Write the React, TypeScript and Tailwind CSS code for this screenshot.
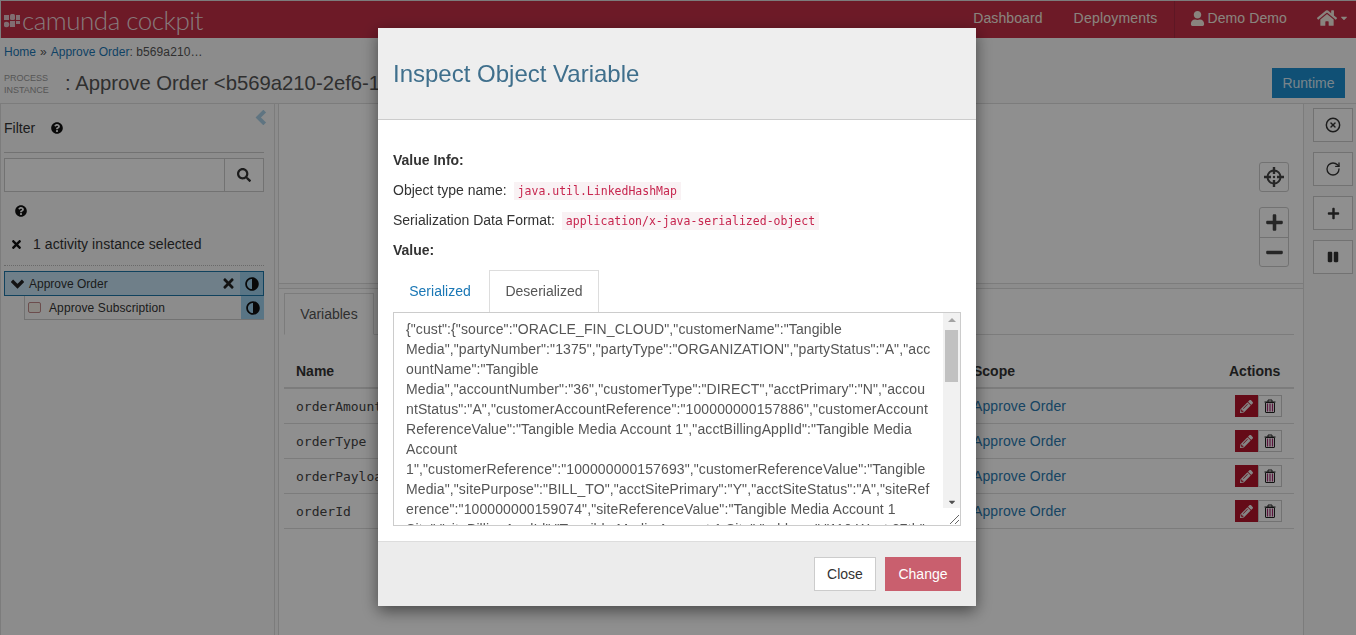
import {
  FaAdjust, FaHome, FaMinus, FaPause, FaPencilAlt, FaPlus,
  FaQuestionCircle, FaSearch, FaTimes, FaUser, FaCaretDown,
} from "react-icons/fa"
import { CircleX, RotateCw } from "lucide-react"

const VARIABLES = ["orderAmount", "orderType", "orderPayload", "orderId"]

const RAW_VALUE =
  '{"cust":{"source":"ORACLE_FIN_CLOUD","customerName":"Tangible Media","partyNumber":"1375","partyType":"ORGANIZATION","partyStatus":"A","accountName":"Tangible Media","accountNumber":"36","customerType":"DIRECT","acctPrimary":"N","accountStatus":"A","customerAccountReference":"100000000157886","customerAccountReferenceValue":"Tangible Media Account 1","acctBillingApplId":"Tangible Media Account 1","customerReference":"100000000157693","customerReferenceValue":"Tangible Media","sitePurpose":"BILL_TO","acctSitePrimary":"Y","acctSiteStatus":"A","siteReference":"100000000159074","siteReferenceValue":"Tangible Media Account 1 Site","siteBillingApplId":"Tangible Media Account 1 Site","address":"110 West 27th"'

function LogoMark() {
  return (
    <svg width="16" height="14" viewBox="0 0 16 14" className="mt-[3px] shrink-0">
      <rect x="0" y="1" width="5" height="5" fill="#e6c3c9" />
      <rect x="6" y="0" width="5" height="6" rx="1.5" fill="#e6c3c9" />
      <rect x="12" y="1" width="4" height="5" fill="#e6c3c9" />
      <circle cx="2.5" cy="10.5" r="2.8" fill="#e6c3c9" />
      <rect x="6" y="7" width="5" height="6" fill="#e6c3c9" />
      <rect x="12" y="7" width="4" height="3" fill="#e6c3c9" />
    </svg>
  )
}

function Crosshair() {
  return (
    <svg width="22" height="22" viewBox="0 0 22 22" className="text-[#444]">
      <circle cx="11" cy="11" r="6.5" fill="none" stroke="currentColor" strokeWidth="2" />
      <path d="M11 1v7M11 14v7M1 11h7M14 11h7" stroke="currentColor" strokeWidth="2.4" />
      <circle cx="11" cy="11" r="1.2" fill="currentColor" />
    </svg>
  )
}

function TrashIcon() {
  return (
    <svg width="12" height="14" viewBox="0 0 12 14" fill="none" stroke="#a3286f" strokeWidth="1">
      <path d="M0.5 3h11M4 3V1h4v2" stroke="#222" />
      <rect x="1.5" y="3.5" width="9" height="10" rx="0.5" stroke="#222" />
      <path d="M3.5 4.5v8M6 4.5v8M8.5 4.5v8" strokeWidth="1.2" />
    </svg>
  )
}

function Chevron({ points, className }: { points: string; className: string }) {
  return (
    <svg viewBox="0 0 14 14" fill="none" stroke="currentColor" strokeWidth="3.6" className={className}>
      <polyline points={points} />
    </svg>
  )
}

function SideButton({ children }: { children: React.ReactNode }) {
  return (
    <div className="flex h-[34px] w-[40px] items-center justify-center border border-[#ccc] bg-white text-[#333]">
      {children}
    </div>
  )
}

function Sidebar() {
  return (
    <aside className="flex w-[275px] shrink-0 flex-col border-r border-l border-[#ddd] pl-[3px] pr-[10px] pt-[14px] text-[#333]">
      <div className="relative flex h-[20px] items-center">
        <span>Filter</span>
        <FaQuestionCircle className="ml-[16px] text-[12px] text-[#111]" />
        <Chevron points="10,1 4,7 10,13" className="absolute right-[-5px] top-[-8px] h-[15px] w-[15px] text-[#a9cfe6]" />
      </div>
      <div className="mt-[14px] border-t border-[#ccc]" />
      <div className="mt-[5px] flex h-[34px] border border-[#ccc] bg-white">
        <div className="flex-1" />
        <div className="flex w-[39px] items-center justify-center border-l border-[#ccc]">
          <FaSearch className="text-[14px] text-[#333]" />
        </div>
      </div>
      <FaQuestionCircle className="ml-[11px] mt-[13px] text-[12px] text-[#111]" />
      <div className="mt-[17px] flex h-[20px] items-center text-[14px] tracking-[0.07px]">
        <FaTimes className="ml-[6px] mr-[10px] text-[13px] text-[#111]" />
        <span>1 activity instance selected</span>
      </div>
      <div className="mt-[11px] border-t border-dotted border-[#bbb]" />
      <div className="mt-[5px] flex h-[25px] items-center border border-[#1d76a8] bg-[#c6e3f5] text-[12px]">
        <Chevron points="1,4 7,10 13,4" className="ml-[6px] mr-[5px] h-[13px] w-[13px] text-[#222]" />
        <span>Approve Order</span>
        <FaTimes className="ml-auto mr-[4px] text-[15px] text-[#222]" />
        <div className="flex h-full w-[23px] items-center justify-center bg-[#9fd0ee]">
          <FaAdjust className="-scale-x-100 text-[14px] text-[#111]" />
        </div>
      </div>
      <div className="ml-[20px] flex h-[24px] items-center border-b border-l border-[#ccc] text-[12px] tracking-[0.1px]">
        <div className="ml-[3px] mr-[8px] h-[11px] w-[13px] rounded-[2px] border border-[#c08a8a] bg-[#f7f0e8]" />
        <span>Approve Subscription</span>
        <div className="ml-auto flex h-full w-[23px] items-center justify-center bg-[#9fd0ee]">
          <FaAdjust className="-scale-x-100 text-[14px] text-[#111]" />
        </div>
      </div>
    </aside>
  )
}

function MainPanel() {
  return (
    <main className="ml-[3px] flex flex-1 flex-col border-l border-r border-[#ddd]">
      <div className="flex h-[180px] flex-col items-end border-b border-[#ddd] bg-white pr-[14px] pt-[58px]">
        <div className="flex h-[30px] w-[30px] items-center justify-center rounded-[3px] border border-[#ccc]">
          <Crosshair />
        </div>
        <div className="mt-[15px] flex w-[30px] flex-col rounded-[3px] border border-[#ccc] text-[#444]">
          <div className="flex h-[30px] items-center justify-center border-b border-[#ccc]">
            <FaPlus className="text-[19px]" />
          </div>
          <div className="flex h-[28px] items-center justify-center">
            <FaMinus className="text-[19px]" />
          </div>
        </div>
      </div>
      <div className="mt-[4px] flex-1 border-t border-[#ddd] bg-white pl-[5px] pr-[9px] pt-[4px]">
        <div className="flex h-[42px] border-b border-[#ddd]">
          <div className="flex h-[42px] w-[90px] items-center justify-center border border-b-white border-[#ddd] bg-white text-[#555]">
            Variables
          </div>
        </div>
        <div className="mt-[20px] grid h-[34px] grid-cols-[677px_256px_1fr] items-center border-b-2 border-[#ddd] pl-[12px] font-bold text-[#333]">
          <span>Name</span>
          <span>Scope</span>
          <span>Actions</span>
        </div>
        {VARIABLES.map((name) => (
          <div
            key={name}
            className="grid h-[35px] grid-cols-[677px_256px_1fr] items-center border-b border-[#ddd] pl-[12px]"
          >
            <span className="pt-[2px] font-['DejaVu_Sans_Mono',monospace] text-[13px] text-[#444]">{name}</span>
            <span className="tracking-[0.1px] text-[#2a7ab0]">Approve Order</span>
            <div className="ml-[6px] flex h-[22px]">
              <div className="flex w-[23px] items-center justify-center bg-[#b5152b]">
                <FaPencilAlt className="text-[13px] text-[#eee]" />
              </div>
              <div className="flex w-[24px] items-center justify-center border border-[#ccc]">
                <TrashIcon />
              </div>
            </div>
          </div>
        ))}
      </div>
    </main>
  )
}

function InspectModal() {
  return (
    <div className="fixed inset-0 flex justify-center bg-black/[0.44] pr-[2px] pt-[28px]">
      <div className="flex h-[578px] w-[598px] flex-col bg-white text-[#333] shadow-[0_5px_15px_rgba(0,0,0,0.5)]">
        <div className="flex h-[92px] items-center border-b border-[#ccc] bg-[#eeeeee] px-[15px]">
          <h4 className="text-[24px] font-normal text-[#3f6f8c]">Inspect Object Variable</h4>
        </div>
        <div className="flex flex-1 flex-col px-[15px] pt-[30px]">
          <p className="h-[20px] font-bold">Value Info:</p>
          <p className="mt-[10px] h-[20px]">
            Object type name:
            <code className="ml-[7px] bg-[#f9f2f4] px-[4px] py-[2px] font-['DejaVu_Sans_Mono',monospace] text-[11.5px] text-[#c7254e]">
              java.util.LinkedHashMap
            </code>
          </p>
          <p className="mt-[10px] h-[20px]">
            Serialization Data Format:
            <code className="ml-[7px] bg-[#f9f2f4] px-[4px] py-[2px] font-['DejaVu_Sans_Mono',monospace] text-[11.5px] text-[#c7254e]">
              application/x-java-serialized-object
            </code>
          </p>
          <p className="mt-[10px] h-[20px] font-bold">Value:</p>
          <div className="mt-[10px] flex h-[42px]">
            <div className="flex w-[96px] items-center justify-center pr-[2px] text-[#1a77b5]">Serialized</div>
            <div className="flex h-[43px] w-[110px] items-center justify-center border border-b-0 border-[#ddd] bg-white pb-[2px] text-[#555]">
              Deserialized
            </div>
          </div>
          <div className="flex h-[214px] w-[568px] overflow-hidden border border-[#ccc] text-[#555]">
            <div className="h-full flex-1 overflow-hidden pl-[12px] pt-[6px]">
              <div className="w-[526px] whitespace-pre-wrap break-words leading-[20px] tracking-[0.11px]">{RAW_VALUE}</div>
            </div>
            <div className="flex w-[17px] shrink-0 flex-col items-center bg-[#f1f1f1]">
              <div className="mt-[5px] h-0 w-0 border-x-[4px] border-b-[4px] border-x-transparent border-b-[#a3a3a3]" />
              <div className="mt-[8px] h-[52px] w-[13px] bg-[#c1c1c1]" />
              <div className="mt-auto flex h-[12px] items-center text-[10px] text-[#505050]">
                <FaCaretDown />
              </div>
              <div className="flex h-[17px] w-full items-end justify-end bg-white pb-[1px] pr-[1px]">
                <svg width="10" height="10" viewBox="0 0 10 10" stroke="#666" strokeWidth="1">
                  <path d="M1 10L10 1M6 10l4-4" />
                </svg>
              </div>
            </div>
          </div>
        </div>
        <div className="flex h-[65px] items-center justify-end gap-[9px] border-t border-[#ddd] bg-[#ececec] px-[15px]">
          <div className="flex h-[34px] w-[62px] items-center justify-center border border-[#ccc] bg-white">Close</div>
          <div className="flex h-[34px] w-[76px] items-center justify-center bg-[#c95f6e] text-white">Change</div>
        </div>
      </div>
    </div>
  )
}

export default function App() {
  return (
    <div className="relative flex h-[635px] w-full flex-col overflow-hidden bg-[#fafafa] font-['Liberation_Sans',Arial,sans-serif] text-[14px]">
      <header className="flex h-[38px] shrink-0 items-center border-l border-t border-[#ddd] bg-[#c22f47] pl-[3px] text-[#f5ece0]">
        <LogoMark />
        <span className="ml-[2px] font-['Lato',sans-serif] text-[26px] font-light leading-none tracking-[-0.5px] text-[#f0d9dc]">
          camunda cockpit
        </span>
        <nav className="ml-auto flex h-full items-center pb-[3px]">
          <span className="mr-[31px] tracking-[0.1px]">Dashboard</span>
          <span className="mr-[16px] tracking-[0.2px]">Deployments</span>
          <div className="mb-[-3px] flex h-[calc(100%+3px)] items-center border-l border-[#a82a40] pb-[3px] pl-[15px]">
            <FaUser className="mr-[3px] text-[15px]" />
            <span className="tracking-[0.1px]">Demo Demo</span>
          </div>
          <div className="ml-[30px] mr-[7px] flex items-center">
            <FaHome className="text-[20px]" />
            <FaCaretDown className="ml-[2px] text-[10px]" />
          </div>
        </nav>
      </header>

      <div className="flex h-[26px] shrink-0 items-center pl-[4px] pt-[2px] text-[12px] text-[#555]">
        <span className="text-[#1a77b5]">Home</span>
        <span className="mx-[4px]">»</span>
        <span className="text-[#1a77b5]">Approve Order</span>
        <span className="tracking-[0.1px]">: b569a210…</span>
      </div>

      <div className="flex h-[38px] shrink-0 items-center pl-[4px] pr-[11px]">
        <div className="mt-[2px] w-[61px] text-[9px] leading-[12px] text-[#999]">
          PROCESS
          <br />
          INSTANCE
        </div>
        <h2 className="text-[20.3px] font-normal leading-none text-[#555]">
          : Approve Order &lt;b569a210-2ef6-11e7-8f4f-0242ac120005&gt;
        </h2>
        <div className="ml-auto flex h-[30px] w-[73px] items-center justify-center bg-[#1d8fd1] text-[#d8ecf8]">Runtime</div>
      </div>

      <div className="mt-[1px] flex flex-1 border-t border-[#ddd]">
        <Sidebar />
        <MainPanel />
        <div className="flex w-[52px] shrink-0 flex-col gap-[10px] pl-[9px] pt-[4px]">
          <SideButton>
            <CircleX size={16} strokeWidth={2.2} />
          </SideButton>
          <SideButton>
            <RotateCw size={16} strokeWidth={2} />
          </SideButton>
          <SideButton>
            <FaPlus className="text-[13px]" />
          </SideButton>
          <SideButton>
            <FaPause className="text-[12px]" />
          </SideButton>
        </div>
      </div>

      <InspectModal />
    </div>
  )
}
